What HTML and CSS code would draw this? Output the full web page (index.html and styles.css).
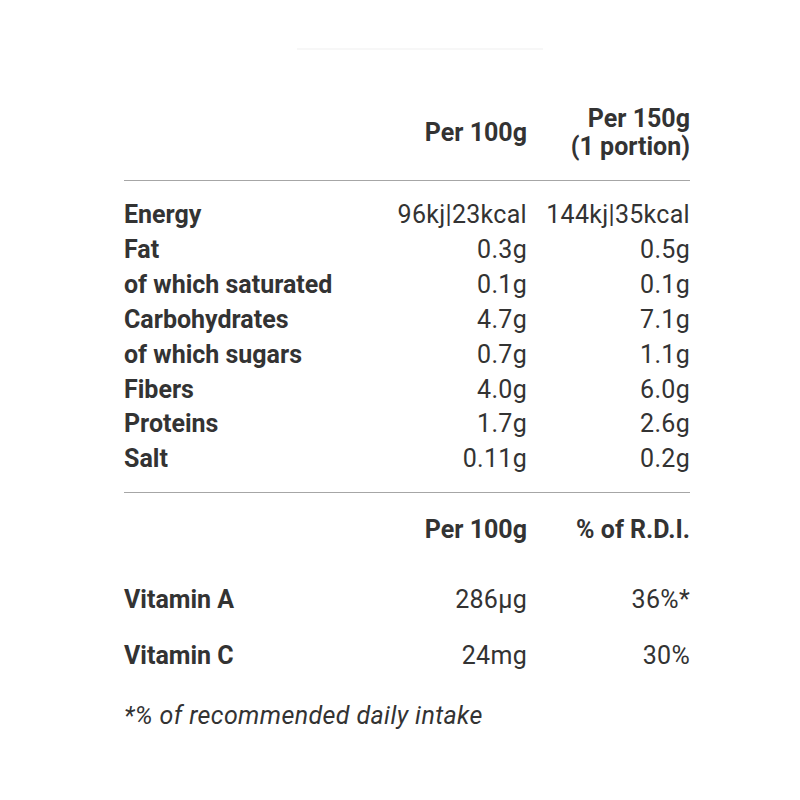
FILE: index.html
```html
<!DOCTYPE html>
<html>
<head>
<meta charset="utf-8">
<link rel="stylesheet" href="styles.css">
</head>
<body>
<div class="page">
  <div class="topline"></div>
  <div class="panel">
    <div class="grid head">
      <div></div>
      <div class="num b">Per 100g</div>
      <div class="num b">Per 150g<br>(1 portion)</div>
    </div>
    <div class="rule rule-top"></div>
    <div class="grid rows">
      <div class="lbl">Energy</div><div class="num">96kj|23kcal</div><div class="num">144kj|35kcal</div>
      <div class="lbl">Fat</div><div class="num">0.3g</div><div class="num">0.5g</div>
      <div class="lbl">of which saturated</div><div class="num">0.1g</div><div class="num">0.1g</div>
      <div class="lbl">Carbohydrates</div><div class="num">4.7g</div><div class="num">7.1g</div>
      <div class="lbl">of which sugars</div><div class="num">0.7g</div><div class="num">1.1g</div>
      <div class="lbl">Fibers</div><div class="num">4.0g</div><div class="num">6.0g</div>
      <div class="lbl">Proteins</div><div class="num">1.7g</div><div class="num">2.6g</div>
      <div class="lbl">Salt</div><div class="num">0.11g</div><div class="num">0.2g</div>
    </div>
    <div class="rule"></div>
    <div class="grid vhead">
      <div></div>
      <div class="num b">Per 100g</div>
      <div class="num b">% of R.D.I.</div>
    </div>
    <div class="grid vrows">
      <div class="lbl">Vitamin A</div><div class="num">286µg</div><div class="num">36%*</div>
      <div class="lbl">Vitamin C</div><div class="num">24mg</div><div class="num">30%</div>
    </div>
    <p class="note">*% of recommended daily intake</p>
  </div>
</div>
</body>
</html>
```
FILE: styles.css
```css
html, body {
  margin: 0;
  padding: 0;
  background: #ffffff;
}
body {
  font-family: Roboto, "Liberation Sans", sans-serif;
  color: #333333;
  font-size: 25px;
}
.page {
  width: 800px;
  height: 800px;
  padding-top: 48px;
  box-sizing: border-box;
}
.topline {
  width: 246px;
  height: 2px;
  margin: 0 0 0 297px;
  background: #f7f7f7;
}
.panel {
  margin-left: 124px;
  width: 566px;
  padding-top: 55px;
}
.grid {
  display: grid;
  grid-template-columns: 1fr 150px 163px;
  align-items: center;
}
.num {
  text-align: right;
  letter-spacing: 0.3px;
}
.b {
  font-weight: 700;
  letter-spacing: 0;
}
.lbl {
  font-weight: 700;
}
.head {
  line-height: 28px;
}
.rule {
  height: 1px;
  background: #a6a6a6;
}
.rule-top {
  margin-top: 19px;
}
.rows {
  line-height: 34.9px;
  padding-top: 17px;
  padding-bottom: 15px;
}
.vhead {
  line-height: 35px;
  padding-top: 19px;
}
.vrows {
  grid-auto-rows: 56px;
  padding-top: 24px;
}
.note {
  margin: 0;
  padding-top: 19px;
  line-height: 28px;
  font-style: italic;
  letter-spacing: 0.4px;
}
```
